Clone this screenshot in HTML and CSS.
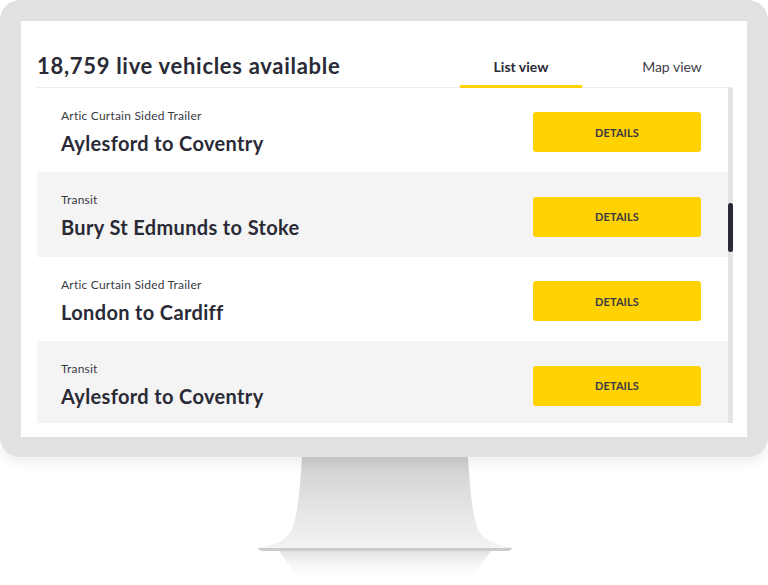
FILE: index.html
```html
<!DOCTYPE html>
<html>
<head>
<meta name="viewport" content="width=device-width, initial-scale=1">
<link rel="stylesheet" href="styles.css">
</head>
<body>
<div class="monitor">
  <div class="frame">
    <div class="screen">
      <div class="header">
        <h3 class="count">18,759 live vehicles available</h3>
        <div class="tabs">
          <div class="tab active">List view</div>
          <div class="tab">Map view</div>
        </div>
      </div>

      <div class="list">
        <div class="rows">
          <div class="row">
            <div class="info">
              <div class="type">Artic Curtain Sided Trailer</div>
              <div class="route">Aylesford to Coventry</div>
            </div>
            <button class="details">DETAILS</button>
          </div>
          <div class="row grey">
            <div class="info">
              <div class="type">Transit</div>
              <div class="route">Bury St Edmunds to Stoke</div>
            </div>
            <button class="details">DETAILS</button>
          </div>
          <div class="row">
            <div class="info">
              <div class="type">Artic Curtain Sided Trailer</div>
              <div class="route">London to Cardiff</div>
            </div>
            <button class="details">DETAILS</button>
          </div>
          <div class="row grey">
            <div class="info">
              <div class="type">Transit</div>
              <div class="route">Aylesford to Coventry</div>
            </div>
            <button class="details">DETAILS</button>
          </div>
        </div>
        <div class="scrollbar">
          <div class="thumb"></div>
        </div>
      </div>
    </div>
  </div>

  <div class="stand">
    <svg width="256" height="128" viewBox="0 0 256 128">
      <defs>
        <linearGradient id="neck" x1="0" y1="0" x2="0" y2="1">
          <stop offset="0" stop-color="#cfcfcf"/>
          <stop offset="0.55" stop-color="#e4e4e4"/>
          <stop offset="1" stop-color="#f3f3f3"/>
        </linearGradient>
        <linearGradient id="shade" x1="0" y1="0" x2="0" y2="1">
          <stop offset="0" stop-color="#e2e2e2"/>
          <stop offset="1" stop-color="#ffffff" stop-opacity="0"/>
        </linearGradient>
      </defs>
      <!-- shadow under the foot -->
      <path d="M22 94 L234 94 L212 124 L44 124 Z" fill="url(#shade)"/>
      <!-- neck and foot -->
      <path d="M45 0 L211 0 C213 30 215 60 222 74 C229 86 244 89 256 91 L0 91 C12 89 27 86 34 74 C41 60 43 30 45 0 Z" fill="url(#neck)"/>
      <path d="M0 91 L256 91 L252 94 L4 94 Z" fill="#cbcbcb"/>
    </svg>
  </div>
</div>
</body>
</html>
```

FILE: styles.css
```css
* {box-sizing: border-box;}

body {
  margin: 0;
  background: #fff;
  font-family: Lato, "Open Sans", Arial, sans-serif;
  color: #2a2a37;
}

.monitor {
  width: 768px;
}

.frame {
  height: 457px;
  background: #e1e1e1;
  border-radius: 20px;
  padding: 21px 21px 20px 21px;
  box-shadow: 0 7px 10px rgba(0, 0, 0, 0.06);
  position: relative;
  z-index: 1;
}

.screen {
  height: 416px;
  background: #fff;
  padding: 0 14px 0 16px;
}

.header {
  display: flex;
  justify-content: space-between;
  height: 67px;
  padding-top: 22px;
  border-bottom: 1px solid #ececec;
}

.count {
  margin: 0;
  align-self: center;
  font-size: 22px;
  font-weight: 700;
  letter-spacing: 0.7px;
}

.tabs {
  display: flex;
  gap: 29px;
}

.tab {
  width: 122px;
  display: flex;
  align-items: center;
  justify-content: center;
  padding-top: 4px;
  font-size: 14px;
  color: #3d3d48;
  border-bottom: 3px solid transparent;
  margin-bottom: -1px;
}

.tab.active {
  font-weight: 700;
  color: #2a2a37;
  border-bottom-color: #ffd200;
}

.list {
  display: flex;
  height: 335px;
  overflow: hidden;
}

.rows {
  flex: 1;
}

.row {
  height: 84px;
  display: flex;
  align-items: center;
  justify-content: space-between;
  padding: 4px 27px 0 24px;
}

.row.grey {
  height: 85px;
  background: #f4f4f4;
}

.info {
  margin-top: -2px;
}

.type {
  font-size: 12px;
  color: #3a3a44;
  line-height: 16px;
  letter-spacing: 0.22px;
  margin-bottom: 7px;
}

.route {
  font-size: 20px;
  font-weight: 700;
  line-height: 24px;
  letter-spacing: 0.35px;
}

.details {
  width: 168px;
  height: 40px;
  border: none;
  border-radius: 3px;
  background: #ffd200;
  color: #3a3a44;
  font-family: inherit;
  font-size: 11px;
  font-weight: 700;
  letter-spacing: 0.1px;
  cursor: pointer;
}

.scrollbar {
  width: 5px;
  background: #e3e3e3;
  padding-top: 115px;
}

.thumb {
  height: 49px;
  background: #2a2a37;
  border-radius: 3px;
}

.stand {
  display: flex;
  justify-content: center;
}

.stand svg {
  display: block;
  margin-left: 2px;
}
```
